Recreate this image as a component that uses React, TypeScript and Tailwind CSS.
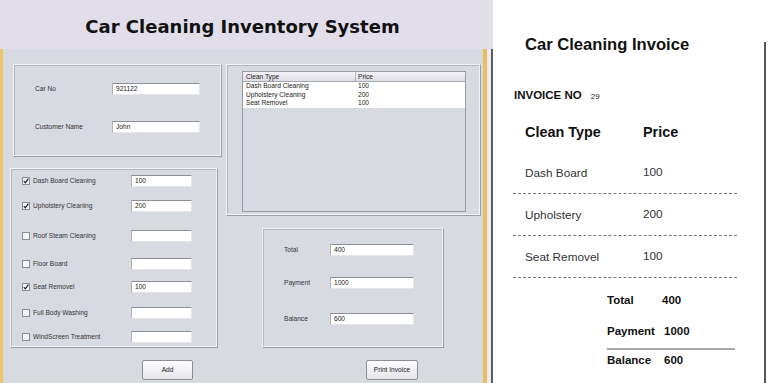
const sans = "font-['Liberation_Sans',Arial,sans-serif]";
const panel =
  'border border-t-[#f3f3f7] border-l-[#f3f3f7] border-r-[#9d9da5] border-b-[#9d9da5] shadow-[inset_-1px_-1px_0_#f3f3f7,inset_1px_1px_0_#b4b4bc]';
const field =
  'bg-white border border-t-[#8e8e96] border-l-[#b0b0b8] border-r-[#e6e6ea] border-b-[#e6e6ea] text-[6.6px] text-[#222] pl-[3px] flex items-center';

function Check({ on }: { on: boolean }) {
  return (
    <svg width="8" height="8" viewBox="0 0 8 8" className="shrink-0">
      <rect x="0.5" y="0.5" width="7" height="7" fill="#f4f4f6" stroke="#8c8c94" />
      {on && <path d="M1.8 4.1 L3.3 5.8 L6.4 1.6" fill="none" stroke="#222" strokeWidth="1.2" />}
    </svg>
  );
}

const services = [
  { name: 'Dash Board Cleaning', on: true, value: '100', mt: 'mt-[6px]' },
  { name: 'Upholstery Cleaning', on: true, value: '200', mt: 'mt-[13px]' },
  { name: 'Roof Steam Cleaning', on: false, value: '', mt: 'mt-[18px]' },
  { name: 'Floor Board', on: false, value: '', mt: 'mt-[16px]' },
  { name: 'Seat Removel', on: true, value: '100', mt: 'mt-[11px]' },
  { name: 'Full Body Washing', on: false, value: '', mt: 'mt-[14px]' },
  { name: 'WindScreen Treatment', on: false, value: '', mt: 'mt-[12px]' },
];

const rows = [
  ['Dash Board Cleaning', '100'],
  ['Upholstery Cleaning', '200'],
  ['Seat Removel', '100'],
];

const invoiceRows = [
  ['Dash Board', '100'],
  ['Upholstery', '200'],
  ['Seat Removel', '100'],
];

function Button({ label, className }: { label: string; className: string }) {
  return (
    <div
      className={`${className} h-[20px] rounded-[2px] border border-[#8e8e98] bg-gradient-to-b from-white to-[#e4e4ea] flex items-center justify-center text-[6.6px] text-[#222]`}
    >
      {label}
    </div>
  );
}

export default function App() {
  return (
    <div className={`w-[768px] h-[383px] flex overflow-hidden bg-white ${sans}`}>
      {/* left: form window */}
      <div className="w-[493px] flex flex-col bg-[#e1dee9]">
        <div className="h-[49px] flex items-center justify-center pr-[8px] pt-[3px]">
          <h1 className="font-['DejaVu_Sans',sans-serif] font-bold text-[18px] text-[#111]">
            Car Cleaning Inventory System
          </h1>
        </div>

        <div className="flex-1 flex">
          <div className="w-[3px] bg-[#ecc768]" />
          <div className="w-[480px] bg-[#d8dae1] flex">
            {/* left column */}
            <div className="w-[223px] pl-[7px] flex flex-col">
              <div className={`${panel} mt-[15px] ml-[3px] w-[209px] h-[93px] flex flex-col text-[6.6px] text-[#333]`}>
                <div className="mt-[18px] flex items-center">
                  <span className="w-[98px] pl-[21px]">Car No</span>
                  <div className={`${field} w-[88px] h-[12px]`}>921122</div>
                </div>
                <div className="mt-[26px] flex items-center">
                  <span className="w-[98px] pl-[21px]">Customer Name</span>
                  <div className={`${field} w-[88px] h-[12px]`}>John</div>
                </div>
              </div>

              <div className={`${panel} mt-[11px] w-[208px] h-[180px] flex flex-col text-[6.6px] text-[#333]`}>
                {services.map((s) => (
                  <div key={s.name} className={`${s.mt} flex items-center h-[12px]`}>
                    <div className="w-[120px] pl-[11px] flex items-center gap-[3px]">
                      <Check on={s.on} />
                      <span>{s.name}</span>
                    </div>
                    <div className={`${field} w-[61px] h-[12px]`}>{s.value}</div>
                  </div>
                ))}
              </div>

              <Button label="Add" className="mt-[12px] ml-[132px] w-[51px]" />
            </div>

            {/* right column */}
            <div className="flex-1 flex flex-col">
              <div className={`${panel} mt-[15px] w-[255px] h-[152px] pt-[6px] pl-[15px]`}>
                <div className="w-[224px] h-[141px] border border-[#9a9aa4] flex flex-col text-[6.6px] text-[#222]">
                  <div className="h-[10px] flex bg-gradient-to-b from-[#f4f4f8] to-[#dcdce4] border-b border-[#a8a8b0]">
                    <div className="w-[113px] pl-[3px] border-r border-[#b0b0b8] flex items-center">Clean Type</div>
                    <div className="pl-[2px] flex items-center">Price</div>
                  </div>
                  {rows.map(([n, p]) => (
                    <div key={n} className="h-[8.5px] flex bg-white leading-[8.5px]">
                      <div className="w-[113px] pl-[3px]">{n}</div>
                      <div className="pl-[2px]">{p}</div>
                    </div>
                  ))}
                </div>
              </div>

              <div className={`${panel} mt-[12px] ml-[36px] w-[182px] h-[120px] flex flex-col text-[6.6px] text-[#333]`}>
                {[
                  ['Total', '400', 'mt-[15px]'],
                  ['Payment', '1000', 'mt-[21px]'],
                  ['Balance', '600', 'mt-[24px]'],
                ].map(([l, v, mt]) => (
                  <div key={l} className={`${mt} flex items-center`}>
                    <span className="w-[67px] pl-[21px]">{l}</span>
                    <div className={`${field} w-[84px] h-[12px]`}>{v}</div>
                  </div>
                ))}
              </div>

              <Button label="Print Invoice" className="mt-[12px] ml-[140px] w-[52px]" />
            </div>
          </div>
          <div className="w-[4px] bg-[#ebbe62]" />
          <div className="w-[4px] bg-[#ececf0]" />
          <div className="w-[2px] bg-[#5a5a60]" />
        </div>
      </div>

      {/* right: invoice */}
      <div className="w-[271px] flex flex-col text-[#222]">
        <h2 className="mt-[35px] ml-[32px] font-bold text-[16.6px] leading-[20px] text-[#111]">Car Cleaning Invoice</h2>
        <div className="mt-[32px] ml-[21px] flex items-baseline">
          <span className="font-bold text-[11.5px] text-[#111]">INVOICE NO</span>
          <span className="ml-[9px] text-[8px]">29</span>
        </div>
        <div className="mt-[19px] ml-[32px] flex font-bold text-[14.4px] text-[#111] leading-[18px]">
          <span className="w-[118px]">Clean Type</span>
          <span>Price</span>
        </div>
        <div className="mt-[11px] ml-[20px] w-[224px] flex flex-col">
          {invoiceRows.map(([n, p]) => (
            <div key={n} className="h-[42px] flex items-center border-b border-dashed border-[#777] text-[11.8px] text-[#333]">
              <span className="w-[130px] pl-[12px] mt-[3px]">{n}</span>
              <span>{p}</span>
            </div>
          ))}
        </div>
        <div className="ml-[114px] flex flex-col font-bold text-[11.5px] text-[#111]">
          <div className="mt-[15px] flex leading-[14px]">
            <span className="w-[55px]">Total</span>
            <span>400</span>
          </div>
          <div className="mt-[17px] flex leading-[14px]">
            <span className="w-[57px]">Payment</span>
            <span>1000</span>
          </div>
          <div className="mt-[10px] w-[128px] h-[2px] bg-[#a8a8a8]" />
          <div className="mt-[3px] flex leading-[14px]">
            <span className="w-[57px]">Balance</span>
            <span>600</span>
          </div>
        </div>
      </div>
      <div className="w-[2px] mt-[42px] bg-[#555]" />
      <div className="w-[2px]" />
    </div>
  );
}
